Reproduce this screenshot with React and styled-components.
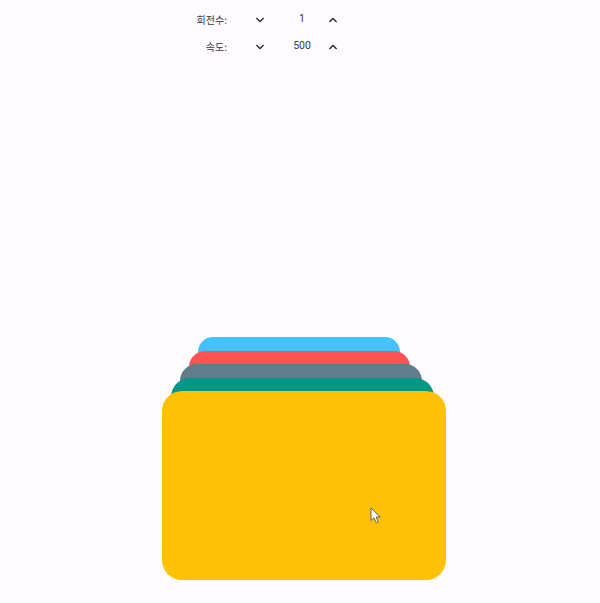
import React from "react";
import styled, { createGlobalStyle } from "styled-components";

const Global = createGlobalStyle`
  html, body { margin: 0; padding: 0; background: #fffbfe; }
  body { font-family: Roboto, "Noto Sans CJK KR", sans-serif; }
  #root { width: 600px; height: 603px; overflow: hidden; }
`;

const Page = styled.div`
  width: 600px;
  height: 603px;
  display: flex;
  flex-direction: column;
  background: #fffbfe;
`;

const Controls = styled.div`
  padding: 6px 0 0 167px;
  display: grid;
  grid-template-columns: 60px 21px 24px 9px 40px 24px;
  grid-auto-rows: 27px;
  align-items: center;
`;

const Label = styled.div`
  grid-column: 1;
  text-align: right;
  font-size: 10px;
  color: #3a383e;
  font-family: "Noto Sans CJK KR", Roboto, sans-serif;
  line-height: 1;
`;

const IconBtn = styled.div`
  grid-column: ${(p) => p.$col};
  display: flex;
  align-items: center;
  justify-content: center;
  height: 27px;
  color: #2b2930;
`;

const Value = styled.div`
  grid-column: 5;
  text-align: center;
  font-size: 10.5px;
  color: #3a383e;
  line-height: 1;
  padding-left: 2px;
`;

const Stage = styled.div`
  position: relative;
  flex: 1;
`;

const Card = styled.div`
  position: absolute;
  background: ${(p) => p.$color};
  border-radius: ${(p) => p.$r}px;
`;

const Cursor = styled.svg`
  position: absolute;
  left: 370px;
  top: 447px;
`;

const Chevron = ({ up }) => (
  <svg width="10" height="6" viewBox="0 0 10 6">
    <path
      d={up ? "M1.4 5 L5 1.5 L8.6 5" : "M1.4 1 L5 4.5 L8.6 1"}
      fill="none"
      stroke="currentColor"
      strokeWidth="1.35"
    />
  </svg>
);

const rows = [
  { label: "회전수:", value: "1" },
  { label: "속도:", value: "500" },
];

const STAGE_TOP = 60;
const cards = [
  { color: "#40c4ff", left: 198, top: 337, w: 202, r: 15 },
  { color: "#ff5252", left: 189, top: 351, w: 221, r: 16 },
  { color: "#607d8b", left: 180, top: 364, w: 242, r: 17 },
  { color: "#009688", left: 171, top: 378, w: 263, r: 19 },
  { color: "#ffc107", left: 162, top: 391, w: 284, r: 20 },
];

export default function App() {
  return (
    <Page>
      <Global />
      <Controls>
        {rows.map((r) => (
          <React.Fragment key={r.label}>
            <Label>{r.label}</Label>
            <IconBtn $col={3}>
              <Chevron />
            </IconBtn>
            <Value>{r.value}</Value>
            <IconBtn $col={6}>
              <Chevron up />
            </IconBtn>
          </React.Fragment>
        ))}
      </Controls>
      <Stage>
        {cards.map((c) => (
          <Card
            key={c.color}
            $color={c.color}
            $r={c.r}
            style={{
              left: c.left,
              top: c.top - STAGE_TOP,
              width: c.w,
              height: c.color === "#ffc107" ? 189 : 120,
            }}
          />
        ))}
        <Cursor width="12" height="17" viewBox="0 0 12 17">
          <path
            d="M1 1 L1 13.5 L4 10.8 L6.2 15.6 L8.2 14.7 L6.1 10 L10.2 10 Z"
            fill="#ffffff"
            stroke="#555"
            strokeWidth="0.9"
            strokeLinejoin="round"
          />
        </Cursor>
      </Stage>
    </Page>
  );
}
